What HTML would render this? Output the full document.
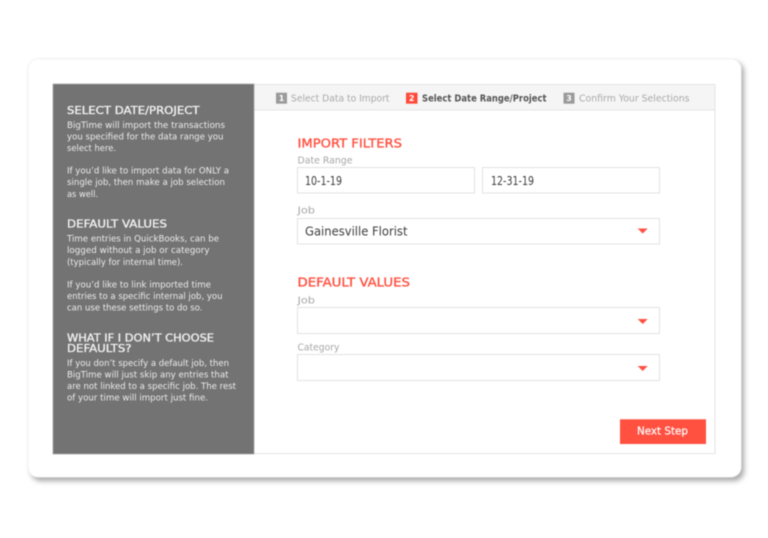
<!DOCTYPE html>
<html>
<head>
<meta charset="utf-8">
<style>
html,body{margin:0;padding:0;background:#fff;width:768px;height:538px;overflow:hidden}
svg{display:block;filter:blur(0.4px)}
text{font-family:"DejaVu Sans","Liberation Sans",sans-serif}
.h{font-size:11px;fill:#f4f4f4;stroke:#f4f4f4;stroke-width:0.3px}
.b{font-size:9px;fill:#ececec}
.s{font-size:9.5px;fill:#a9a9a9}
.r{font-size:12.8px;fill:#ff5040;stroke:#ff5040;stroke-width:0.35px}
.l{font-size:9.5px;fill:#a6a6a6}
.v{font-size:12px;fill:#3c3c3c}
.n{font-size:8px;font-weight:bold;fill:#fff;text-anchor:middle}
</style>
</head>
<body>
<svg width="768" height="538" viewBox="0 0 768 538" xmlns="http://www.w3.org/2000/svg">
<defs>
<filter id="sh" x="-5%" y="-5%" width="110%" height="110%"><feGaussianBlur stdDeviation="2.6"/></filter>
</defs>
<rect width="768" height="538" fill="#fff"/>
<rect x="31" y="62" width="713" height="419" rx="10" fill="#a8a8a8" filter="url(#sh)"/>
<rect x="28" y="59" width="713" height="418" rx="10" fill="#fff" stroke="#f2f2f2" stroke-width="1"/>

<rect x="254" y="84.5" width="461" height="369" fill="#fff" stroke="#e4e4e4"/>
<rect x="254" y="84.5" width="461" height="25.5" fill="#f5f5f5" stroke="#e4e4e4"/>
<rect x="53" y="84" width="201" height="370" fill="#737373" stroke="#a8a8a8" stroke-width="0.8"/>

<text class="h" x="67" y="114" textLength="132.5" lengthAdjust="spacingAndGlyphs">SELECT DATE/PROJECT</text>
<text class="b" x="67" y="128" textLength="158" lengthAdjust="spacingAndGlyphs">BigTime will import the transactions</text>
<text class="b" x="67" y="139.5" textLength="156.5" lengthAdjust="spacingAndGlyphs">you specified for the data range you</text>
<text class="b" x="67" y="151" textLength="49" lengthAdjust="spacingAndGlyphs">select here.</text>
<text class="b" x="67" y="173.7" textLength="162" lengthAdjust="spacingAndGlyphs">If you’d like to import data for ONLY a</text>
<text class="b" x="67" y="185.2" textLength="158" lengthAdjust="spacingAndGlyphs">single job, then make a job selection</text>
<text class="b" x="67" y="197" textLength="31" lengthAdjust="spacingAndGlyphs">as well.</text>

<text class="h" x="67" y="227.5" textLength="100" lengthAdjust="spacingAndGlyphs">DEFAULT VALUES</text>
<text class="b" x="67" y="241.7" textLength="152" lengthAdjust="spacingAndGlyphs">Time entries in QuickBooks, can be</text>
<text class="b" x="67" y="253.2" textLength="142.5" lengthAdjust="spacingAndGlyphs">logged without a job or category</text>
<text class="b" x="67" y="264.8" textLength="116" lengthAdjust="spacingAndGlyphs">(typically for internal time).</text>
<text class="b" x="67" y="287.7" textLength="144" lengthAdjust="spacingAndGlyphs">If you’d like to link imported time</text>
<text class="b" x="67" y="299.2" textLength="155.5" lengthAdjust="spacingAndGlyphs">entries to a specific internal job, you</text>
<text class="b" x="67" y="310.7" textLength="135.5" lengthAdjust="spacingAndGlyphs">can use these settings to do so.</text>

<text class="h" x="67" y="341.3" textLength="147" lengthAdjust="spacingAndGlyphs">WHAT IF I DON’T CHOOSE</text>
<text class="h" x="67" y="351.8" textLength="64.5" lengthAdjust="spacingAndGlyphs">DEFAULTS?</text>
<text class="b" x="67" y="366" textLength="162" lengthAdjust="spacingAndGlyphs">If you don’t specify a default job, then</text>
<text class="b" x="67" y="377.5" textLength="161.5" lengthAdjust="spacingAndGlyphs">BigTime will just skip any entries that</text>
<text class="b" x="67" y="389" textLength="169" lengthAdjust="spacingAndGlyphs">are not linked to a specific job. The rest</text>
<text class="b" x="67" y="400.5" textLength="141" lengthAdjust="spacingAndGlyphs">of your time will import just fine.</text>

<rect x="276" y="92.7" width="11" height="11" fill="#9a9a9a"/>
<text class="n" x="281.5" y="101.2">1</text>
<text class="s" x="291" y="101.7" textLength="98.5" lengthAdjust="spacingAndGlyphs">Select Data to Import</text>
<rect x="406" y="92.7" width="11.5" height="11" fill="#ff4a3a"/>
<text class="n" x="411.7" y="101.2">2</text>
<text class="s" x="422" y="101.7" textLength="124.5" lengthAdjust="spacingAndGlyphs" style="font-weight:bold;fill:#555">Select Date Range/Project</text>
<rect x="563.5" y="92.7" width="11" height="11" fill="#9a9a9a"/>
<text class="n" x="569" y="101.2">3</text>
<text class="s" x="579" y="101.7" textLength="110.5" lengthAdjust="spacingAndGlyphs">Confirm Your Selections</text>

<text class="r" x="297.5" y="147.7" textLength="104.5" lengthAdjust="spacingAndGlyphs">IMPORT FILTERS</text>
<text class="l" x="297.5" y="163.7" textLength="55" lengthAdjust="spacingAndGlyphs">Date Range</text>
<rect x="297.5" y="167.5" width="177" height="25.5" fill="#fff" stroke="#e2e2e2"/>
<rect x="482.5" y="167.5" width="177" height="25.5" fill="#fff" stroke="#e2e2e2"/>
<text class="v" x="305" y="185" textLength="37" lengthAdjust="spacingAndGlyphs">10-1-19</text>
<text class="v" x="491" y="185" textLength="43" lengthAdjust="spacingAndGlyphs">12-31-19</text>

<text class="l" x="297.5" y="213.3" textLength="17.5" lengthAdjust="spacingAndGlyphs">Job</text>
<rect x="297.5" y="218.5" width="362" height="25.5" fill="#fff" stroke="#e2e2e2"/>
<text class="v" x="305" y="235.7" textLength="102.5" lengthAdjust="spacingAndGlyphs">Gainesville Florist</text>
<path d="M637.7 228.5h10l-5 5z" fill="#ff5040"/>

<text class="r" x="297.5" y="286.7" textLength="112.5" lengthAdjust="spacingAndGlyphs">DEFAULT VALUES</text>
<text class="l" x="297.5" y="303.3" textLength="17.5" lengthAdjust="spacingAndGlyphs">Job</text>
<rect x="297.5" y="307.5" width="362" height="26" fill="#fff" stroke="#e2e2e2"/>
<path d="M637.7 319h10l-5 5z" fill="#ff5040"/>
<text class="l" x="297.5" y="350.3" textLength="42" lengthAdjust="spacingAndGlyphs">Category</text>
<rect x="297.5" y="354.5" width="362" height="26" fill="#fff" stroke="#e2e2e2"/>
<path d="M637.7 366h10l-5 5z" fill="#ff5040"/>

<rect x="620" y="419.3" width="86" height="24.7" fill="#ff5040"/>
<text x="637" y="434.3" font-size="10.5" fill="#fff" stroke="#fff" stroke-width="0.2" textLength="51" lengthAdjust="spacingAndGlyphs">Next Step</text>
</svg>
</body>
</html>
